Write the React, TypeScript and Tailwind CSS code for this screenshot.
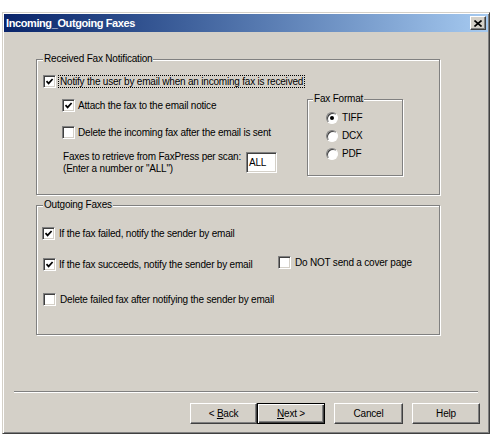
import type { ReactNode } from 'react';

const FONT = { fontFamily: '"Liberation Sans", Arial, sans-serif' };

function CheckMark() {
  return (
    <svg width="9" height="9" viewBox="0 0 9 9" className="block">
      <polyline points="1.5,4.2 3.6,6.4 7.6,2" fill="none" stroke="#000" strokeWidth="1.7" />
    </svg>
  );
}

function Checkbox({ checked }: { checked?: boolean }) {
  return (
    <span className="flex h-[13px] w-[13px] shrink-0 items-center justify-center border border-t-[#808080] border-l-[#808080] border-r-white border-b-white bg-white shadow-[inset_1px_1px_0_#404040,inset_-1px_-1px_0_#d4d0c8]">
      {checked && <CheckMark />}
    </span>
  );
}

function Radio({ checked }: { checked?: boolean }) {
  return (
    <span className="flex h-[12px] w-[12px] shrink-0 items-center justify-center rounded-full border border-t-[#808080] border-l-[#808080] border-r-white border-b-white bg-white shadow-[inset_1px_1px_0_#404040]">
      {checked && <span className="h-[4px] w-[4px] rounded-full bg-black" />}
    </span>
  );
}

function Group({ title, className, children, legendLeft }: { title: string; className: string; children: ReactNode; legendLeft: string }) {
  return (
    <div className={`relative border border-[#808080] shadow-[inset_1px_1px_0_#fff,1px_1px_0_#fff] ${className}`}>
      <span className={`absolute -top-[7px] ${legendLeft} whitespace-nowrap bg-[#d4d0c8] px-[1px] leading-[12px]`}>{title}</span>
      {children}
    </div>
  );
}

function Button({ children, isDefault, className }: { children: ReactNode; isDefault?: boolean; className: string }) {
  const bevel = isDefault
    ? 'border border-black shadow-[inset_1px_1px_0_#fff,inset_-1px_-1px_0_#404040,inset_-2px_-2px_0_#808080]'
    : 'border border-t-white border-l-white border-r-[#404040] border-b-[#404040] shadow-[inset_-1px_-1px_0_#808080]';
  return (
    <div className={`flex h-[21px] items-center justify-center bg-[#d4d0c8] leading-[12px] ${bevel} ${className}`}>
      {children}
    </div>
  );
}

export default function App() {
  return (
    <div className="h-[439px] w-[493px] overflow-hidden bg-white text-[10px] tracking-[-0.2px] text-black" style={FONT}>
      <div className="ml-[2px] mt-[12px] flex h-[422px] w-[488px] flex-col border border-t-[#d4d0c8] border-l-[#d4d0c8] border-r-[#404040] border-b-[#404040] bg-[#d4d0c8] p-[1px] shadow-[inset_1px_1px_0_#fff,inset_-1px_-1px_0_#808080]">
        {/* title bar */}
        <div className="flex h-[18px] shrink-0 items-center bg-gradient-to-r from-[#0a246a] to-[#a6caf0] pl-[2px] pr-[2px]">
          <span className="flex-1 text-[11px] font-bold leading-[13px] tracking-[-0.4px] text-white">Incoming_Outgoing Faxes</span>
          <span className="flex h-[14px] w-[16px] items-center justify-center border border-t-white border-l-white border-r-[#404040] border-b-[#404040] bg-[#d4d0c8] shadow-[inset_-1px_-1px_0_#808080]">
            <svg width="8" height="7" viewBox="0 0 8 7" className="block">
              <path d="M0.5 0.5 L7.5 6.5 M7.5 0.5 L0.5 6.5" stroke="#000" strokeWidth="1.6" />
            </svg>
          </span>
        </div>

        {/* received */}
        <Group title="Received Fax Notification" legendLeft="left-[6px]" className="ml-[32px] mt-[27px] h-[136px] w-[404px] shrink-0">
          <div className="ml-[6px] mt-[15px] flex items-center">
            <Checkbox checked />
            <span className="ml-[2px] whitespace-nowrap border border-dotted border-black px-[1px] leading-[11px]">
              Notify the user by email when an incoming fax is received
            </span>
          </div>
          <div className="flex">
            <div className="w-[270px] shrink-0">
              <div className="ml-[25px] mt-[11px] flex items-center">
                <Checkbox checked />
                <span className="ml-[3px] whitespace-nowrap leading-[12px]">Attach the fax to the email notice</span>
              </div>
              <div className="ml-[25px] mt-[14px] flex items-center">
                <Checkbox />
                <span className="ml-[3px] whitespace-nowrap leading-[12px]">Delete the incoming fax after the email is sent</span>
              </div>
              <div className="ml-[26px] mt-[12px] flex items-start">
                <div className="w-[183px] whitespace-nowrap leading-[12px]">
                  <div>Faxes to retrieve from FaxPress per scan:</div>
                  <div>(Enter a number or "ALL")</div>
                </div>
                <div className="mt-[1px] flex h-[21px] w-[31px] items-center border border-t-[#808080] border-l-[#808080] border-r-white border-b-white bg-white pl-[2px] shadow-[inset_1px_1px_0_#404040,inset_-1px_-1px_0_#d4d0c8]">
                  ALL
                </div>
              </div>
            </div>
            <Group title="Fax Format" legendLeft="left-[5px]" className="mt-[11px] h-[77px] w-[96px] shrink-0">
              <div className="ml-[18px] mt-[12px] flex flex-col gap-[6px]">
                <div className="flex h-[12px] items-center">
                  <Radio checked />
                  <span className="ml-[4px] leading-[12px]">TIFF</span>
                </div>
                <div className="flex h-[12px] items-center">
                  <Radio />
                  <span className="ml-[4px] leading-[12px]">DCX</span>
                </div>
                <div className="flex h-[12px] items-center">
                  <Radio />
                  <span className="ml-[4px] leading-[12px]">PDF</span>
                </div>
              </div>
            </Group>
          </div>
        </Group>

        {/* outgoing */}
        <Group title="Outgoing Faxes" legendLeft="left-[6px]" className="ml-[32px] mt-[10px] h-[130px] w-[404px] shrink-0">
          <div className="ml-[5px] mt-[21px] flex items-center">
            <Checkbox checked />
            <span className="ml-[4px] whitespace-nowrap leading-[12px]">If the fax failed, notify the sender by email</span>
          </div>
          <div className="ml-[6px] mt-[18px] flex items-center">
            <Checkbox checked />
            <span className="ml-[3px] w-[219px] whitespace-nowrap leading-[12px]">If the fax succeeds, notify the sender by email</span>
            <div className="-mt-[4px] flex items-center">
              <Checkbox />
              <span className="ml-[4px] whitespace-nowrap leading-[12px]">Do NOT send a cover page</span>
            </div>
          </div>
          <div className="ml-[6px] mt-[22px] flex items-center">
            <Checkbox />
            <span className="ml-[4px] whitespace-nowrap leading-[12px]">Delete failed fax after notifying the sender by email</span>
          </div>
        </Group>

        {/* separator */}
        <div className="ml-[10px] mt-[56px] h-[2px] w-[464px] shrink-0 border-t border-b border-t-[#808080] border-b-white" />

        {/* buttons */}
        <div className="mt-[10px] flex justify-end pr-[8px]">
          <Button className="w-[67px]">
            <span>&lt; <span className="underline">B</span>ack</span>
          </Button>
          <Button isDefault className="w-[68px]">
            <span><span className="underline">N</span>ext &gt;</span>
          </Button>
          <Button className="ml-[9px] w-[69px]">Cancel</Button>
          <Button className="ml-[9px] w-[68px]">Help</Button>
        </div>
      </div>
    </div>
  );
}
